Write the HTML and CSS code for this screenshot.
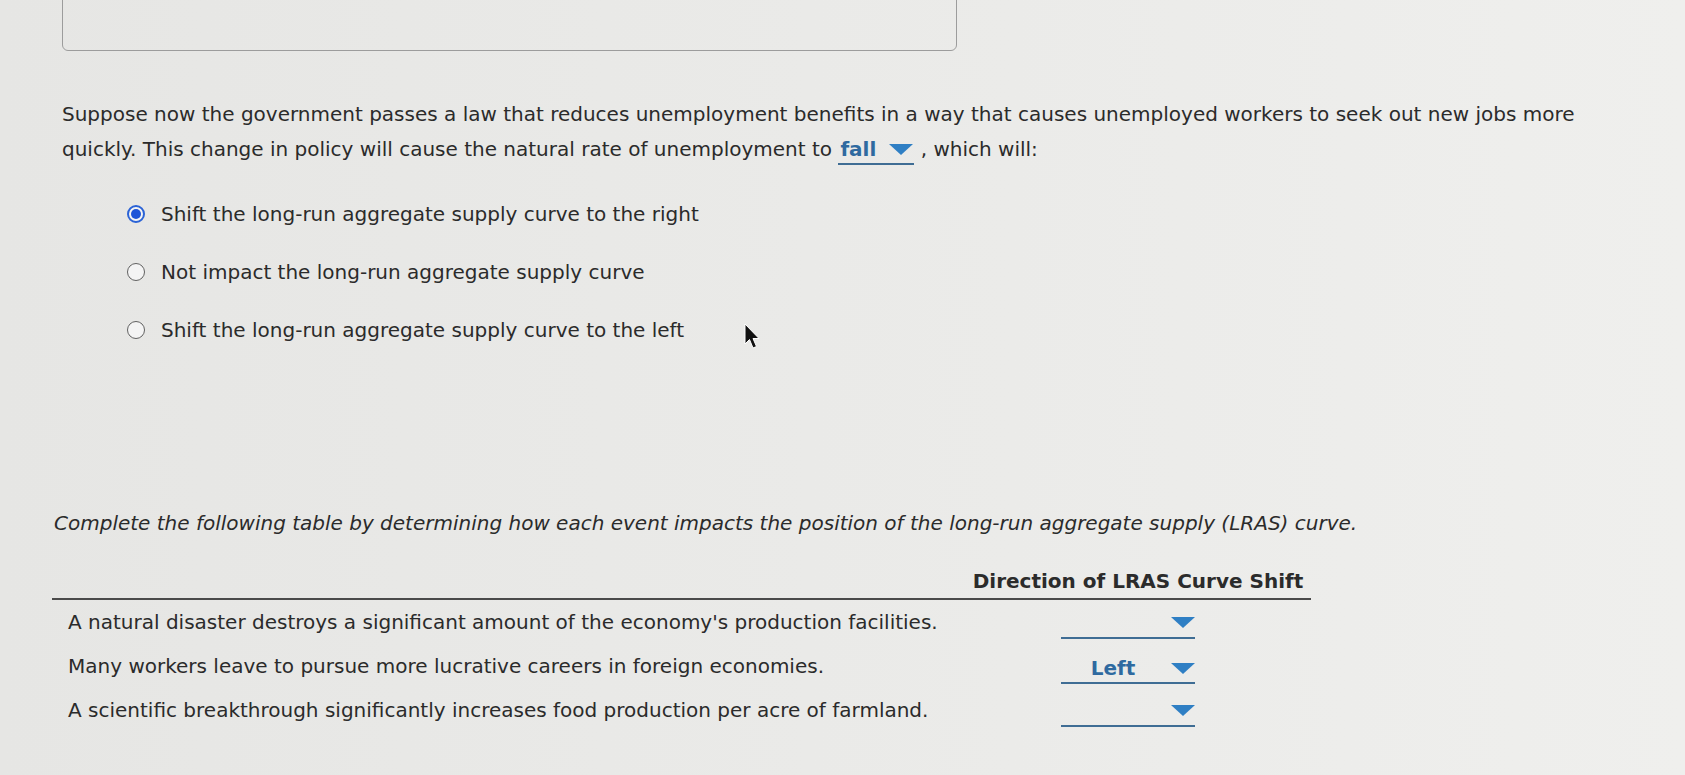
FILE: index.html
```html
<!DOCTYPE html>
<html lang="en">
<head>
    <meta charset="UTF-8">
    <title>LRAS Question</title>
    <link rel="stylesheet" href="styles.css">
</head>
<body>

    <!-- answer box from previous part -->
    <div class="page">
        <div class="answer-box"></div>

        <p class="question">
            Suppose now the government passes a law that reduces unemployment benefits in a way that causes unemployed workers to seek out new jobs more
            quickly. This change in policy will cause the natural rate of unemployment to
            <span class="select inline-select"><span class="value">fall</span><span class="arrow"></span></span>
            , which will:
        </p>

        <ul class="choices">
            <li class="choice"><span class="radio checked"></span>Shift the long-run aggregate supply curve to the right</li>
            <li class="choice"><span class="radio"></span>Not impact the long-run aggregate supply curve</li>
            <li class="choice"><span class="radio"></span>Shift the long-run aggregate supply curve to the left</li>
        </ul>

        <svg class="cursor" width="18" height="28" viewBox="0 0 18 28">
            <path d="M1 1 L1 21 L5.5 16.5 L9 25 L12.5 23.5 L9 15.5 L15 15.5 Z" fill="#111" stroke="#fff" stroke-width="1"/>
        </svg>

        <p class="instructions">Complete the following table by determining how each event impacts the position of the long-run aggregate supply (LRAS) curve.</p>

        <table class="shift-table">
            <tr>
                <th></th>
                <th class="col-head">Direction of LRAS Curve Shift</th>
            </tr>
            <tr>
                <td>A natural disaster destroys a significant amount of the economy's production facilities.</td>
                <td class="cell-select"><span class="select table-select"><span class="value"></span><span class="arrow"></span></span></td>
            </tr>
            <tr>
                <td>Many workers leave to pursue more lucrative careers in foreign economies.</td>
                <td class="cell-select"><span class="select table-select"><span class="value">Left</span><span class="arrow"></span></span></td>
            </tr>
            <tr>
                <td>A scientific breakthrough significantly increases food production per acre of farmland.</td>
                <td class="cell-select"><span class="select table-select"><span class="value"></span><span class="arrow"></span></span></td>
            </tr>
        </table>
    </div>

</body>
</html>
```

FILE: styles.css
```css
body {
    margin: 0;
    padding: 0;
    font-family: "DejaVu Sans", Verdana, sans-serif;
    font-size: 20px;
    color: #2b2b2b;
    background: linear-gradient(to right, #e6e6e4, #ebebe9 60%, #efefed);
    overflow: hidden;
}
.page {
    position: relative;
    padding-left: 62px;
    height: 775px;
}
.answer-box {
    width: 893px;
    height: 60px;
    margin-top: -11px;
    border: 1px solid #9c9c9c;
    border-radius: 0 0 6px 6px;
}
.question {
    width: 1545px;
    margin: 46px 0 0 0;
    line-height: 35px;
}
.select {
    display: inline-flex;
    align-items: center;
    color: #2f6aa0;
    font-weight: bold;
    border-bottom: 2px solid #3f6d94;
    box-sizing: border-box;
}
.select .value {
    height: 28px;
    line-height: 28px;
}
.arrow {
    display: inline-block;
    width: 0;
    height: 0;
    margin-left: auto;
    border-left: 12px solid transparent;
    border-right: 12px solid transparent;
    border-top: 11px solid #2f7fc4;
}
.inline-select {
    width: 76px;
    padding: 0 1px 0 2px;
    vertical-align: bottom;
    margin-bottom: 2px;
}
.choices {
    list-style: none;
    margin: 18px 0 0 0;
    padding: 0 0 0 65px;
}
.choice {
    display: flex;
    align-items: center;
    height: 58px;
    gap: 16px;
}
.radio {
    flex: none;
    width: 18px;
    height: 18px;
    border: 1.5px solid #616161;
    border-radius: 50%;
    background: #f4f4f4;
    box-sizing: border-box;
    position: relative;
}
.radio.checked {
    border: 2px solid #2b63d6;
}
.radio.checked::after {
    content: "";
    position: absolute;
    left: 2px;
    top: 2px;
    width: 10px;
    height: 10px;
    border-radius: 50%;
    background: #1f55d8;
}
.cursor {
    position: absolute;
    left: 744px;
    top: 334px;
}
.instructions {
    font-style: italic;
    line-height: 26px;
    margin: 151px 0 0 -8px;
}
.shift-table {
    margin: 32px 0 0 -10px;
    width: 1259px;
    border-collapse: collapse;
}
.shift-table th {
    text-align: center;
    font-weight: bold;
    line-height: 26px;
    padding: 0 0 4px;
    border-bottom: 2px solid #4a4a4a;
}
.col-head {
    width: 346px;
}
.shift-table td {
    padding: 0 0 0 16px;
    height: 44px;
}
.cell-select {
    text-align: center;
}
.table-select {
    width: 134px;
    margin: 6px 36px 0 0;
}
.table-select .value {
    width: 104px;
    text-align: center;
}
```
